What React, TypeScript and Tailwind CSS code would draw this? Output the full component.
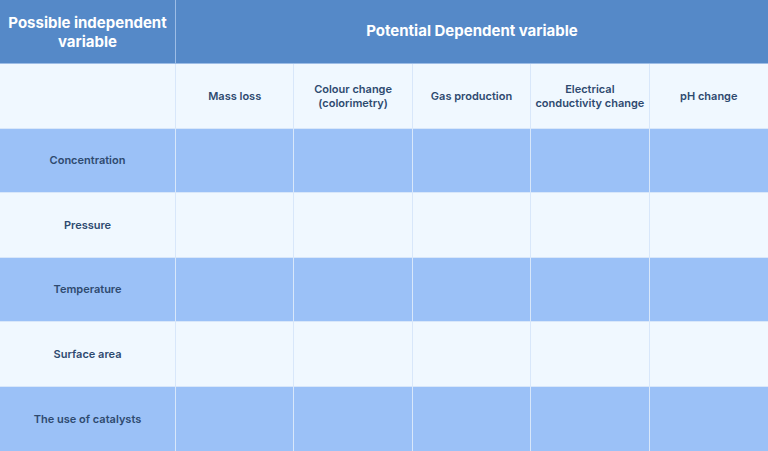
const dependents = [
  "Mass loss",
  "Colour change\n(colorimetry)",
  "Gas production",
  "Electrical\nconductivity change",
  "pH change",
];

const independents = [
  "Concentration",
  "Pressure",
  "Temperature",
  "Surface area",
  "The use of catalysts",
];

export default function App() {
  return (
    <div
      className="w-[768px] h-[451px] overflow-hidden bg-[#f0f8ff]"
      style={{ fontFamily: "Inter, 'Noto Sans', sans-serif" }}
    >
      <div className="grid grid-cols-[176px_repeat(5,1fr)] grid-rows-[64px_repeat(6,1fr)] h-full">
        {/* top header */}
        <div className="bg-[#5589c8] border-r border-b border-[#9dbde6] flex items-center justify-center text-center text-white font-bold text-[15px] leading-[19px] px-2">
          Possible independent
          <br />
          variable
        </div>
        <div className="col-span-5 bg-[#5589c8] border-b border-[#9dbde6] flex items-center justify-center text-white font-bold text-[15px]">
          Potential Dependent variable
        </div>

        {/* dependent variable names */}
        <div className="border-r border-b border-[#d8e7fa]" />
        {dependents.map((d, i) => (
          <div
            key={d}
            className={`flex items-center justify-center text-center whitespace-pre-line text-[#2e4a6f] font-semibold text-[11px] leading-[14px] border-b border-[#d8e7fa] ${
              i < dependents.length - 1 ? "border-r" : ""
            }`}
          >
            {d}
          </div>
        ))}

        {/* rows */}
        {independents.map((name, r) => {
          const bg = r % 2 === 0 ? "bg-[#9bc1f7]" : "bg-[#f0f8ff]";
          const last = r === independents.length - 1;
          return [
            <div
              key={name}
              className={`${bg} flex items-center justify-center text-center text-[#2e4a6f] font-semibold text-[11px] border-r border-[#d8e7fa] ${
                last ? "" : "border-b"
              }`}
            >
              {name}
            </div>,
            ...dependents.map((d, i) => (
              <div
                key={name + d}
                className={`${bg} border-[#d8e7fa] ${last ? "" : "border-b"} ${
                  i < dependents.length - 1 ? "border-r" : ""
                }`}
              />
            )),
          ];
        })}
      </div>
    </div>
  );
}
